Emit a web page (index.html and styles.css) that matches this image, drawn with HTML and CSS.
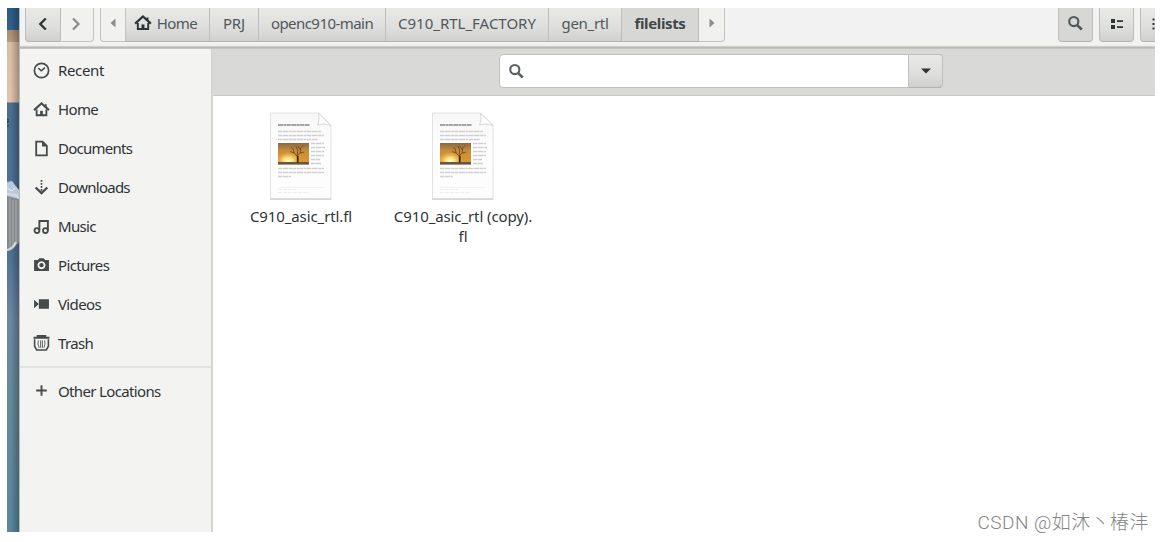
FILE: index.html
```html
<!DOCTYPE html>
<html lang="en">
<head>
    <meta charset="UTF-8">
    <meta name="viewport" content="width=device-width, initial-scale=1.0">
    <title>filelists</title>
    <link rel="stylesheet" href="styles.css">
</head>
<body>
    <!-- shared icons -->
    <svg class="defs" width="0" height="0">
        <symbol id="home" viewBox="0 0 16 16">
            <path d="M1 8.6 8 2.2l7 6.4" fill="none" stroke="currentColor" stroke-width="2"/>
            <path d="M3.4 8v5.4h9.2V8M12 3v3" fill="none" stroke="currentColor" stroke-width="1.7"/>
            <path d="M6.7 14V9.3h2.6V14z" fill="currentColor"/>
        </symbol>
        <symbol id="search" viewBox="0 0 16 16">
            <circle cx="6.4" cy="6.2" r="4.3" fill="none" stroke="currentColor" stroke-width="2"/>
            <path d="M9.600 9.500l4.300 4.100" stroke="currentColor" stroke-width="2.500"/>
        </symbol>
        <symbol id="document" viewBox="0 0 64 88">
            <path d="M1.500 1h48L62 13.500V86.500H1.500z" fill="url(#paper)" stroke="#e2e2e2"/>
            <path d="M1 87.300h61.500" stroke="#c4c4c4" stroke-width="1" opacity=".8"/>
            <path d="M49.500 1c1 4 .5 9-1 12 4-1.500 9-1 13.500.5z" fill="#fff" stroke="#d6d6d6"/>
            <path d="M9 13h32" stroke="#a4a4a4" stroke-width="2" stroke-dasharray="5 .4 3 .4 4 .5"/>
            <g stroke="#d0d0d0" stroke-width="1.500" stroke-dasharray="4 .5 6 .6 3 .4">
                <path d="M9 19.500h43M9 23.500h46M9 27.500h40M42 31.500h13M42 35.500h14M42 39.500h13M42 43.500h13M42 47.500h9M42 51.500h10M9 56.500h46M9 60.500h46M9 64.500h13"/>
            </g>
            <path d="M9 77.500h18M9 80.500h31" stroke="#ededed" stroke-dasharray="4 1"/>
            <path d="M9 75.500h46" stroke="#f4f4f4"/>
            <rect x="9" y="31" width="31" height="21.500" fill="url(#sky)"/>
            <rect x="9" y="31" width="31" height="21.500" fill="url(#sun)"/>
            <path d="M9 50h31v2.500H9z" fill="#5c5a53"/>
            <path d="M28.500 50.500c.8-3 .3-5-.3-6.500l-3-3-4-1.500m4 1.500-1-4-2-2m6 9 .5-6-2-4m1.500 10 3-3 4-1m-4 1 .5-5 2.500-2.500m-2.500 4.500-3-4" fill="none" stroke="#6b4a20" stroke-width=".9"/>
            <path d="M28.700 44v6.500" stroke="#38250f" stroke-width="1.700"/>
        </symbol>
        <defs>
            <linearGradient id="paper" x1="0" y1="0" x2="0" y2="1">
                <stop offset="0" stop-color="#f7f7f7"/>
                <stop offset=".4" stop-color="#fefefe"/>
                <stop offset="1" stop-color="#fdfdfd"/>
            </linearGradient>
            <linearGradient id="sky" x1="0" y1="0" x2="0" y2="1">
                <stop offset="0" stop-color="#8a6a3f"/>
                <stop offset=".35" stop-color="#c58c3c"/>
                <stop offset="1" stop-color="#e29a2b"/>
            </linearGradient>
            <radialGradient id="sun" cx=".33" cy=".82" r=".42">
                <stop offset="0" stop-color="#fffbe0"/>
                <stop offset=".35" stop-color="#ffe07a"/>
                <stop offset="1" stop-color="#f2a93a" stop-opacity="0"/>
            </radialGradient>
        </defs>
    </svg>

    <div class="screen">
        <div class="desktop">
            <svg width="12" height="524" viewBox="0 0 12 524">
                <path d="M0 115l2-2M0 111.500c2-1 2 1 0 2M0 118.500l2-1" stroke="#253b4e" fill="none"/>
                <path d="M0 186l12 4v44l-6 7-6 2z" fill="#85898b"/>
                <path d="M3 190v52M6 192v48M9 192v44" stroke="#a9adaf" stroke-width="1"/>
                <path d="M0 174l5-1 3 4 4 5v9l-12-3z" fill="#b9cbda"/>
                <path d="M0 180l5 3 3-3M1 186l9 1" stroke="#e8eff4" fill="none"/>
                <path d="M0 186q8 0 12 4" stroke="#d6d9da" stroke-width="2" fill="none"/>
                <path d="M0 242q6-1 9-8" stroke="#d8d8d6" stroke-width="2" fill="none"/>
            </svg>
        </div>

        <div class="window">
            <div class="header">
                <div class="nav">
                    <div class="btn back"><svg width="16" height="16" viewBox="0 0 16 16"><path d="M10.800 2.500 5.300 8l5.500 5.500" fill="none" stroke="#2e3436" stroke-width="2.400"/></svg></div>
                    <div class="btn forward flat"><svg width="16" height="16" viewBox="0 0 16 16"><path d="M4 2.500 9.500 8 4 13.500" fill="none" stroke="#8b8e8f" stroke-width="2.200"/></svg></div>
                </div>
                <div class="path">
                    <div class="btn arrow flat"><svg width="8" height="10" viewBox="0 0 8 10"><path d="M6.500 .5v9L1.500 5z" fill="#8b8e8f"/></svg></div>
                    <div class="btn crumb-home"><svg width="18" height="18"><use href="#home"/></svg><span>Home</span></div>
                    <div class="btn crumb-prj"><span>PRJ</span></div>
                    <div class="btn crumb-main"><span>openc910-main</span></div>
                    <div class="btn crumb-factory"><span>C910_RTL_FACTORY</span></div>
                    <div class="btn crumb-rtl"><span>gen_rtl</span></div>
                    <div class="btn crumb-current"><span>filelists</span></div>
                    <div class="btn arrow flat"><svg width="8" height="10" viewBox="0 0 8 10"><path d="M1.500 .5v9l5-4.500z" fill="#8b8e8f"/></svg></div>
                </div>
                <div class="tools">
                    <div class="btn tool pressed"><svg width="17" height="17"><use href="#search"/></svg></div>
                    <div class="btn tool"><svg width="16" height="16" viewBox="0 0 16 16"><path d="M2 3h4v4H2zM2 9h4v4H2zM8 4.200h6v1.700H8zM8 10.200h6v1.700H8z" fill="#2e3436"/></svg></div>
                    <div class="btn tool"><svg width="16" height="16" viewBox="0 0 16 16"><path d="M2.500 2.500h2v2h-2zM2.500 7h2v2h-2zM2.500 11.500h2v2h-2zM5.500 2.500h9v2h-9zM5.500 7h9v2h-9zM5.500 11.500h9v2h-9z" fill="#2e3436"/></svg></div>
                </div>
            </div>

            <div class="content">
                <div class="sidebar">
                    <div class="place recent">
                        <svg width="17" height="17" viewBox="0 0 16 16"><circle cx="8" cy="8" r="6.700" fill="none" stroke="currentColor" stroke-width="1.600"/><path d="M5 5.800 7.800 8.300l3.500-3" fill="none" stroke="currentColor" stroke-width="1.400"/></svg>
                        <span>Recent</span>
                    </div>
                    <div class="place home">
                        <svg width="17" height="17"><use href="#home"/></svg>
                        <span>Home</span>
                    </div>
                    <div class="place documents">
                        <svg width="17" height="17" viewBox="0 0 16 16"><path d="M3 1.500h6l4 4v9H3z" fill="none" stroke="currentColor" stroke-width="1.700"/><path d="M8.500 1v5H13z" fill="currentColor"/></svg>
                        <span>Documents</span>
                    </div>
                    <div class="place downloads">
                        <svg width="17" height="17" viewBox="0 0 16 16"><path d="M2.500 8 8 13.300 13.500 8" fill="none" stroke="currentColor" stroke-width="2.200"/><path d="M8 1v11" stroke="currentColor" stroke-width="1.600" stroke-dasharray="1.600 1.200"/></svg>
                        <span>Downloads</span>
                    </div>
                    <div class="place music">
                        <svg width="17" height="17" viewBox="0 0 16 16"><path d="M6 11.500V2.800h8v8.700" fill="none" stroke="currentColor" stroke-width="1.800"/><circle cx="3.700" cy="11.800" r="2.300" fill="none" stroke="currentColor" stroke-width="1.700"/><circle cx="11.700" cy="11.800" r="2.300" fill="none" stroke="currentColor" stroke-width="1.700"/></svg>
                        <span>Music</span>
                    </div>
                    <div class="place pictures">
                        <svg width="17" height="17" viewBox="0 0 16 16"><path fill-rule="evenodd" d="M1 3.800h3.500L6 2h4l1.500 1.800H15V14H1zM8 5a3.700 3.700 0 1 0 .01 0z" fill="currentColor"/><circle cx="8" cy="8.700" r="2" fill="currentColor"/></svg>
                        <span>Pictures</span>
                    </div>
                    <div class="place videos">
                        <svg width="17" height="17" viewBox="0 0 16 16"><path d="M5.500 4H15v9H5.500zM1 4.500l4.500 4L1 12.500z" fill="currentColor"/></svg>
                        <span>Videos</span>
                    </div>
                    <div class="place trash">
                        <svg width="17" height="17" viewBox="0 0 16 16"><path d="M.5 4.500V2.500h3V1h9v1.500h3v2z" fill="currentColor"/><path d="M1.500 5v6.500L3.500 15h9l2-3.500V5" fill="none" stroke="currentColor" stroke-width="1.500"/><path d="M5 6q-1 3.500.8 7M7.200 6v7M8.800 6v7M11 6q1 3.500-.8 7" fill="none" stroke="currentColor" stroke-width=".8"/></svg>
                        <span>Trash</span>
                    </div>
                    <div class="separator"></div>
                    <div class="place other">
                        <svg width="17" height="17" viewBox="0 0 16 16"><path d="M3 8h10M8 3v10" stroke="currentColor" stroke-width="1.800"/></svg>
                        <span>Other Locations</span>
                    </div>
                </div>

                <div class="main">
                    <div class="search-bar">
                        <div class="entry"><svg width="17" height="17"><use href="#search"/></svg></div>
                        <div class="btn dropdown"><svg width="10" height="6" viewBox="0 0 10 6"><path d="M0 .5h10L5 5.500z" fill="#2e3436"/></svg></div>
                    </div>
                    <div class="files">
                        <div class="file">
                            <svg width="64" height="88"><use href="#document"/></svg>
                            <span class="name">C910_asic_rtl.fl</span>
                        </div>
                        <div class="file">
                            <svg width="64" height="88"><use href="#document"/></svg>
                            <span class="name">C910_asic_rtl (copy).<br>fl</span>
                        </div>
                    </div>
                </div>
            </div>
        </div>
    </div>
    <div class="watermark">CSDN @如沐丶椿沣</div>
</body>
</html>
```
FILE: styles.css
```css
* {
    margin: 0;
    padding: 0;
    box-sizing: border-box;
}

body {
    width: 1163px;
    height: 542px;
    padding: 8px 8px 10px 7px;
    background: #fff;
    font-family: "Noto Sans", "Open Sans", sans-serif;
    font-size: 15px;
    color: #2e3436;
    overflow: hidden;
}

svg {
    display: block;
    flex: none;
}

.defs {
    position: absolute;
}

.screen {
    display: flex;
    width: 1148px;
    height: 524px;
    overflow: hidden;
}

.desktop {
    width: 12px;
    background:
        linear-gradient(90deg, rgba(0, 0, 0, 0) 30%, rgba(0, 0, 0, 0.28)),
        linear-gradient(#2c5b87 0, #30618c 22px, #a58f70 22px, #b29b7c 34px, #d9bda3 34px, #e0c4ab 94px, #4a6f92 95px, #507395 250px, #6d87a3 310px, #648b99 400px, #5b86a0 524px);
}

.window {
    display: flex;
    flex-direction: column;
    width: 1136px;
    border-left: 1px solid #b5b9ba;
    overflow: hidden;
}

.header {
    display: flex;
    flex: none;
    height: 41px;
    padding-left: 5px;
    background: linear-gradient(#f2f2f2 0, #f2f2f2 37px, #e6e6e3 38px, #b9b9b3 39px, #b9b9b3 40px, #d0d0cd 41px);
}

.nav,
.path,
.tools {
    display: flex;
    flex: none;
    height: 34px;
}

.path {
    margin-left: 6px;
}

.tools {
    margin-left: 333px;
    gap: 6px;
}

.btn {
    display: flex;
    align-items: center;
    justify-content: center;
    flex: none;
    height: 34px;
    padding-bottom: 2px;
    background: linear-gradient(#e9e9e8, #dededd 60%, #d0d0cf);
    border: 1px solid #bdbdbb;
    border-top: 0;
    border-left-width: 0;
    border-bottom-color: #b2b2b0;
    color: #50585a;
}

.path .btn {
    padding-bottom: 3px;
}

.btn.flat {
    background: #f1f1f0;
    border-color: #c3c3c1;
}

.nav .back {
    width: 36px;
    border-left-width: 1px;
    border-radius: 0 0 0 4px;
}

.nav .forward {
    width: 33px;
    border-radius: 0 0 4px 0;
}

.arrow {
    width: 26px;
}

.arrow:first-child {
    border-left-width: 1px;
    border-radius: 0 0 0 4px;
}

.arrow:last-child {
    border-radius: 0 0 4px 0;
}

.btn.crumb-home {
    width: 84px;
    gap: 5px;
    padding-right: 4px;
    letter-spacing: -0.6px;
}

.crumb-home svg {
    color: #2e3436;
}

.crumb-prj {
    width: 49px;
    letter-spacing: -0.1px;
}

.crumb-main {
    width: 127px;
    letter-spacing: -0.55px;
}

.crumb-factory {
    width: 163px;
}

.crumb-rtl {
    width: 73px;
    letter-spacing: -0.3px;
}

.btn.crumb-current {
    width: 77px;
    background: #d7d7d5;
    font-weight: bold;
    letter-spacing: -0.35px;
    color: #3f4749;
}

.tool {
    width: 35px;
    border-left-width: 1px;
    border-radius: 0 0 4px 4px;
}

.tool.pressed {
    background: #d7d7d6;
}

.content {
    display: flex;
    flex: 1;
}

.sidebar {
    flex: none;
    width: 193px;
    padding-top: 2px;
    background: #f3f3f2;
    border-right: 2px solid #d5d5d4;
}

.place {
    display: flex;
    align-items: center;
    gap: 8px;
    height: 38.900px;
    padding-left: 13px;
    letter-spacing: -0.65px;
    white-space: nowrap;
}

.place.recent {
    letter-spacing: -0.35px;
}

.place.documents,
.place.downloads {
    letter-spacing: -0.75px;
}

.place svg {
    color: #464a4b;
}

.separator {
    height: 2px;
    margin: 4px 0 3px;
    background: #e2e2e1;
}

.main {
    flex: 1;
    background: #fff;
}

.search-bar {
    display: flex;
    height: 47px;
    padding-top: 5px;
    padding-left: 286px;
    background: #d9d9d7;
    border-bottom: 1px solid #c9c9c7;
}

.entry {
    display: flex;
    align-items: center;
    width: 410px;
    height: 34px;
    padding-left: 8px;
    background: #fff;
    border: 1px solid #c0c0be;
    border-radius: 4px 0 0 4px;
    color: #5b5f60;
}

.dropdown {
    width: 34px;
    padding-bottom: 0;
    border-top: 1px solid #bdbdbb;
    border-radius: 0 4px 4px 0;
}

.files {
    display: flex;
    padding: 16px 0 0 7px;
}

.file {
    display: flex;
    flex-direction: column;
    align-items: center;
    width: 162px;
}

.name {
    margin-top: 6px;
    line-height: 20px;
    text-align: center;
    white-space: nowrap;
    letter-spacing: -0.1px;
}

.watermark {
    position: absolute;
    right: 14px;
    bottom: 5px;
    font-family: Roboto, "Noto Sans CJK SC", sans-serif;
    font-size: 19px;
    font-weight: 300;
    line-height: 28px;
    letter-spacing: 0.45px;
    color: #858585;
    white-space: nowrap;
}
```
